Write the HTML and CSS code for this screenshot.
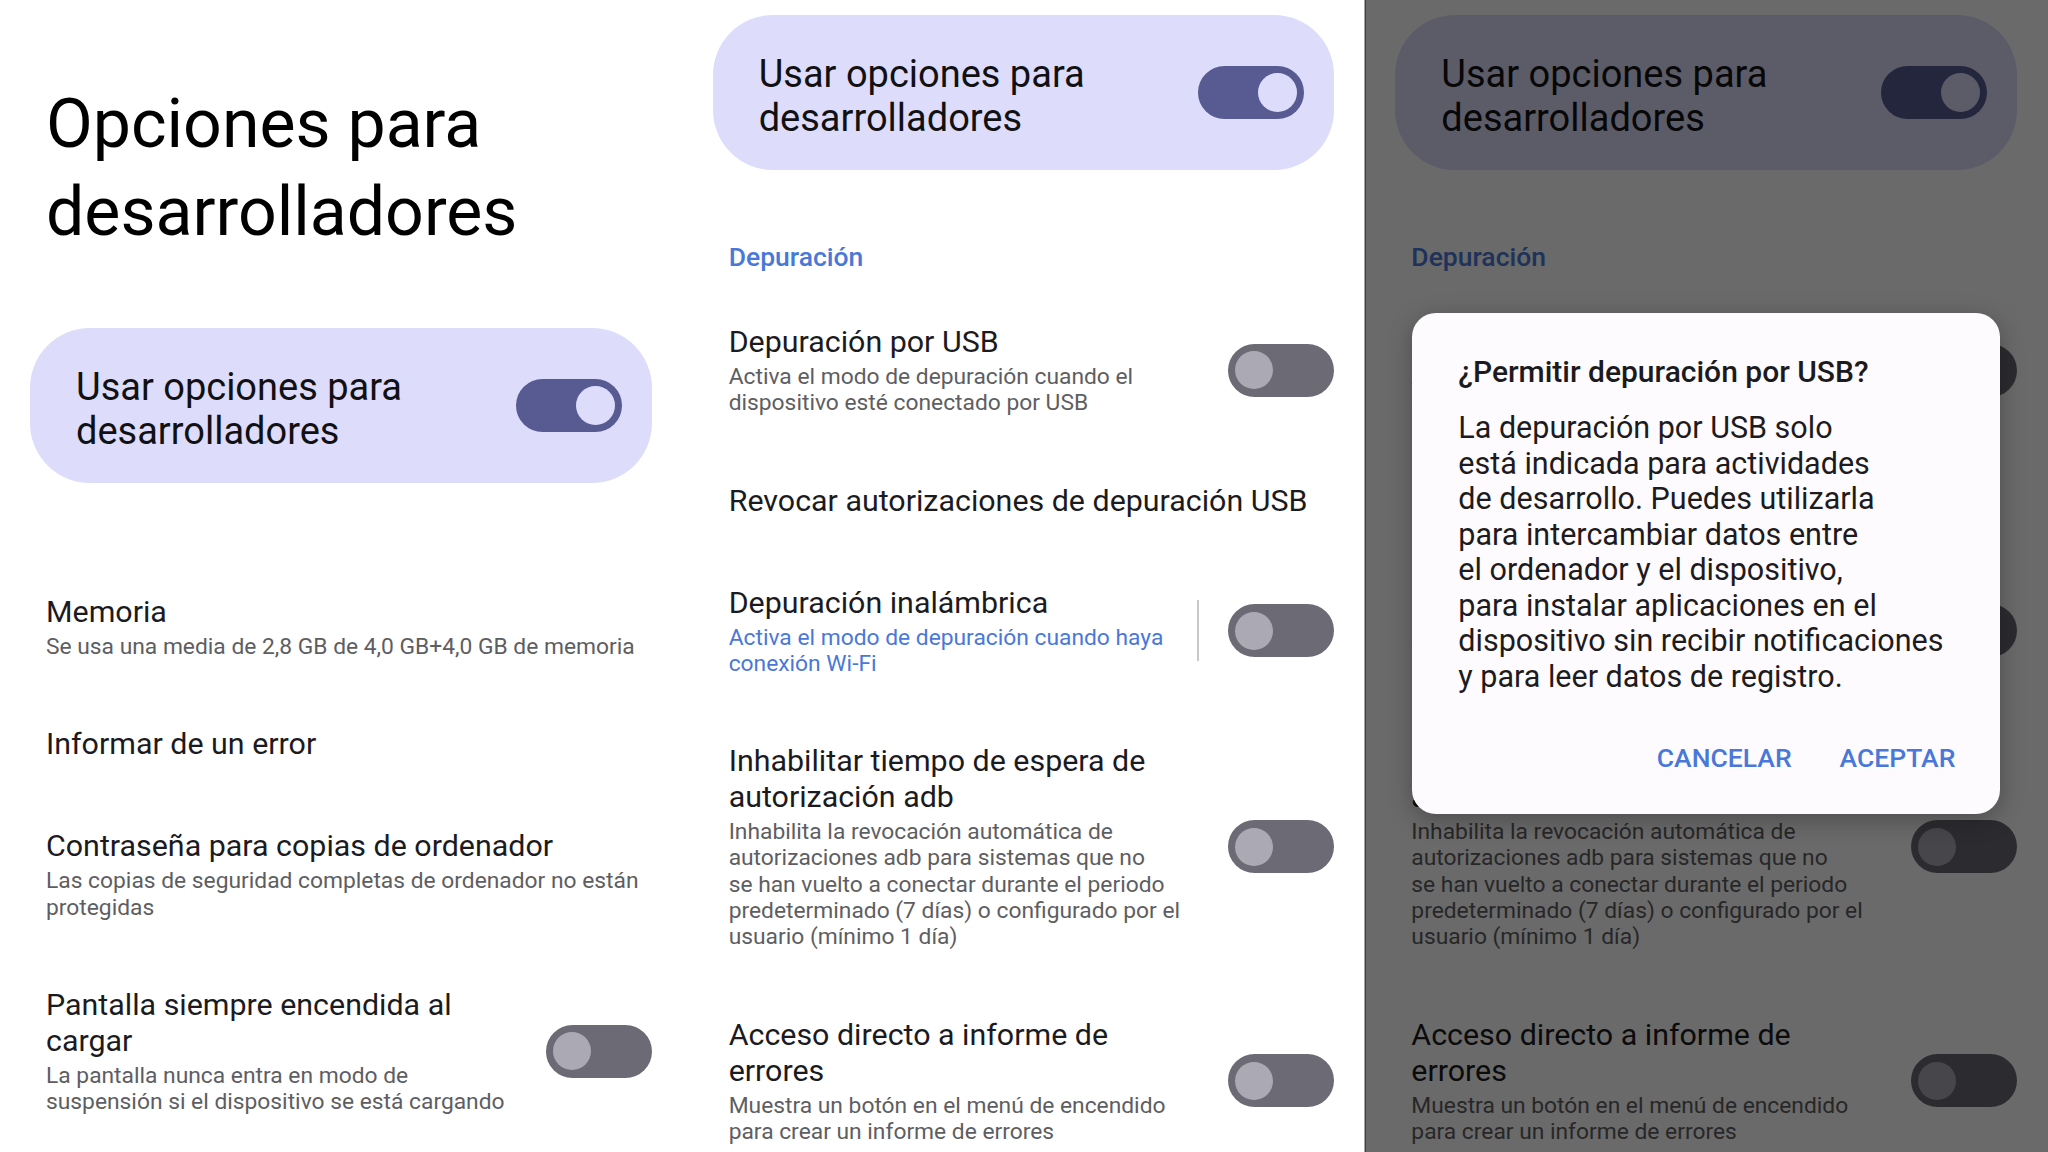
FILE: index.html
```html
<!DOCTYPE html>
<html lang="es">
<head>
<meta charset="utf-8">
<title>Opciones para desarrolladores</title>
<link rel="stylesheet" href="styles.css">
</head>
<body>
<div class="screens">

  <!-- Screen 1: top of the developer options page -->
  <section class="screen">
    <h1 class="page-title">Opciones para<br>desarrolladores</h1>
    <div class="main-switch main-switch--below-title">
      <span class="main-switch__label">Usar opciones para<br>desarrolladores</span>
      <span class="toggle toggle--on"></span>
    </div>
    <ul class="prefs prefs--after-switch">
      <li class="pref">
        <div class="pref__text">
          <div class="pref__title">Memoria</div>
          <div class="pref__summary">Se usa una media de 2,8 GB de 4,0 GB+4,0 GB de memoria</div>
        </div>
      </li>
      <li class="pref">
        <div class="pref__text">
          <div class="pref__title">Informar de un error</div>
        </div>
      </li>
      <li class="pref">
        <div class="pref__text">
          <div class="pref__title">Contraseña para copias de ordenador</div>
          <div class="pref__summary">Las copias de seguridad completas de ordenador no están<br>protegidas</div>
        </div>
      </li>
      <li class="pref">
        <div class="pref__text">
          <div class="pref__title">Pantalla siempre encendida al<br>cargar</div>
          <div class="pref__summary">La pantalla nunca entra en modo de<br>suspensión si el dispositivo se está cargando</div>
        </div>
        <span class="toggle"></span>
      </li>
    </ul>
  </section>

  <!-- Screen 2: scrolled to the debugging category -->
  <section class="screen screen--divided">
    <div class="main-switch main-switch--pinned">
      <span class="main-switch__label">Usar opciones para<br>desarrolladores</span>
      <span class="toggle toggle--on"></span>
    </div>
    <h2 class="category">Depuración</h2>
    <ul class="prefs">
      <li class="pref">
        <div class="pref__text">
          <div class="pref__title">Depuración por USB</div>
          <div class="pref__summary">Activa el modo de depuración cuando el<br>dispositivo esté conectado por USB</div>
        </div>
        <span class="toggle"></span>
      </li>
      <li class="pref">
        <div class="pref__text">
          <div class="pref__title">Revocar autorizaciones de depuración USB</div>
        </div>
      </li>
      <li class="pref">
        <div class="pref__text">
          <div class="pref__title">Depuración inalámbrica</div>
          <div class="pref__summary pref__summary--link">Activa el modo de depuración cuando haya<br>conexión Wi-Fi</div>
        </div>
        <span class="pref__divider"></span>
        <span class="toggle"></span>
      </li>
      <li class="pref">
        <div class="pref__text">
          <div class="pref__title">Inhabilitar tiempo de espera de<br>autorización adb</div>
          <div class="pref__summary">Inhabilita la revocación automática de<br>autorizaciones adb para sistemas que no<br>se han vuelto a conectar durante el periodo<br>predeterminado (7 días) o configurado por el<br>usuario (mínimo 1 día)</div>
        </div>
        <span class="toggle"></span>
      </li>
      <li class="pref">
        <div class="pref__text">
          <div class="pref__title">Acceso directo a informe de<br>errores</div>
          <div class="pref__summary">Muestra un botón en el menú de encendido<br>para crear un informe de errores</div>
        </div>
        <span class="toggle"></span>
      </li>
    </ul>
  </section>

  <!-- Screen 3: same list with the USB debugging confirmation dialog -->
  <section class="screen screen--dimmed">
    <div class="main-switch main-switch--pinned">
      <span class="main-switch__label">Usar opciones para<br>desarrolladores</span>
      <span class="toggle toggle--on"></span>
    </div>
    <h2 class="category">Depuración</h2>
    <ul class="prefs">
      <li class="pref">
        <div class="pref__text">
          <div class="pref__title">Depuración por USB</div>
          <div class="pref__summary">Activa el modo de depuración cuando el<br>dispositivo esté conectado por USB</div>
        </div>
        <span class="toggle"></span>
      </li>
      <li class="pref">
        <div class="pref__text">
          <div class="pref__title">Revocar autorizaciones de depuración USB</div>
        </div>
      </li>
      <li class="pref">
        <div class="pref__text">
          <div class="pref__title">Depuración inalámbrica</div>
          <div class="pref__summary pref__summary--link">Activa el modo de depuración cuando haya<br>conexión Wi-Fi</div>
        </div>
        <span class="pref__divider"></span>
        <span class="toggle"></span>
      </li>
      <li class="pref">
        <div class="pref__text">
          <div class="pref__title">Inhabilitar tiempo de espera de<br>autorización adb</div>
          <div class="pref__summary">Inhabilita la revocación automática de<br>autorizaciones adb para sistemas que no<br>se han vuelto a conectar durante el periodo<br>predeterminado (7 días) o configurado por el<br>usuario (mínimo 1 día)</div>
        </div>
        <span class="toggle"></span>
      </li>
      <li class="pref">
        <div class="pref__text">
          <div class="pref__title">Acceso directo a informe de<br>errores</div>
          <div class="pref__summary">Muestra un botón en el menú de encendido<br>para crear un informe de errores</div>
        </div>
        <span class="toggle"></span>
      </li>
    </ul>

    <div class="dialog" role="dialog" aria-labelledby="dlg-title">
      <h3 class="dialog__title" id="dlg-title">¿Permitir depuración por USB?</h3>
      <p class="dialog__body">La depuración por USB solo<br>está indicada para actividades<br>de desarrollo. Puedes utilizarla<br>para intercambiar datos entre<br>el ordenador y el dispositivo,<br>para instalar aplicaciones en el<br>dispositivo sin recibir notificaciones<br>y para leer datos de registro.</p>
      <div class="dialog__actions">
        <button class="dialog__btn" type="button">CANCELAR</button>
        <button class="dialog__btn" type="button">ACEPTAR</button>
      </div>
    </div>
  </section>

</div>
</body>
</html>
```

FILE: styles.css
```css
html, body {
  margin: 0;
  padding: 0;
  background: #ffffff;
}

body {
  font-family: Roboto, "Noto Sans", "Liberation Sans", sans-serif;
  color: #1b1b1f;
}

.screens {
  display: grid;
  grid-template-columns: repeat(3, 1fr);
  width: 2048px;
  height: 1152px;
  overflow: hidden;
}

.screen {
  position: relative;
  overflow: hidden;
  background: #ffffff;
}

.screen--divided {
  box-shadow: inset -1px 0 0 #a6a6a6;
}

/* scrim behind the dialog */
.screen--dimmed::after {
  content: "";
  position: absolute;
  inset: 0;
  background: rgba(0, 0, 0, 0.585);
  box-shadow: inset 1px 0 0 #3f3f3f;
  z-index: 1;
}

/* ---------- page title ---------- */
.page-title {
  margin: 80px 0 0 46px;
  font-size: 68px;
  line-height: 88px;
  font-weight: 400;
  color: #000000;
  white-space: nowrap;
}

/* ---------- main switch bar ---------- */
.main-switch {
  display: flex;
  align-items: center;
  justify-content: space-between;
  height: 155px;
  margin: 0 31px 0 30px;
  padding: 0 30px 0 46px;
  box-sizing: border-box;
  border-radius: 60px;
  background: #dddcfb;
}

.main-switch--below-title {
  margin-top: 72px;
}

.main-switch--pinned {
  margin-top: 15px;
}

.main-switch__label {
  font-size: 38px;
  line-height: 44px;
  color: #111114;
  white-space: nowrap;
  padding-top: 6px;
}

/* ---------- switches ---------- */
.toggle {
  flex: none;
  display: flex;
  align-items: center;
  width: 106px;
  height: 53px;
  padding: 0 7px;
  box-sizing: border-box;
  border-radius: 27px;
  background: #6b6a75;
}

.toggle::after {
  content: "";
  width: 38px;
  height: 38px;
  border-radius: 50%;
  background: #aba9b4;
}

.toggle--on {
  justify-content: flex-end;
  background: #585b92;
}

.toggle--on::after {
  width: 39px;
  height: 39px;
  background: #dddcfb;
}

/* ---------- category header ---------- */
.category {
  margin: 72px 0 0 46px;
  font-size: 26.5px;
  line-height: 30px;
  font-weight: 500;
  color: #4a78d8;
}

/* ---------- preference list ---------- */
.prefs {
  list-style: none;
  margin: 19px 0 0;
  padding: 0;
}

.prefs--after-switch {
  margin-top: 78px;
}

.pref {
  display: flex;
  align-items: center;
  padding: 33px 31px 33px 46px;
}

.pref__text {
  flex: 1;
  min-width: 0;
}

.pref__title {
  font-size: 30.4px;
  line-height: 36px;
  color: #1b1b1f;
  white-space: nowrap;
}

.pref__summary {
  margin-top: 4px;
  font-size: 22.8px;
  line-height: 26.3px;
  color: #5e5e62;
  white-space: nowrap;
}

.pref__summary--link {
  color: #4a78d8;
}

.pref__divider {
  flex: none;
  width: 2px;
  height: 61px;
  margin-right: 29px;
  background: #c9c9cc;
}

/* ---------- dialog ---------- */
.dialog {
  position: absolute;
  z-index: 2;
  left: 47px;
  top: 313px;
  width: 588px;
  height: 501px;
  box-sizing: border-box;
  padding: 41px 45px 0 46px;
  border-radius: 24px;
  background: #fdfbfe;
  box-shadow: 0 6px 24px rgba(0, 0, 0, 0.28);
}

.dialog__title {
  margin: 0;
  font-size: 30px;
  line-height: 36px;
  font-weight: 500;
  color: #1b1b1f;
  white-space: nowrap;
}

.dialog__body {
  margin: 20px 0 0;
  font-size: 30.5px;
  line-height: 35.5px;
  color: #1d1b20;
  white-space: nowrap;
}

.dialog__actions {
  display: flex;
  justify-content: flex-end;
  gap: 48px;
  margin-top: 48px;
}

.dialog__btn {
  padding: 0;
  border: 0;
  background: none;
  font-family: inherit;
  font-size: 26.5px;
  line-height: 32px;
  font-weight: 500;
  letter-spacing: 0;
  color: #4a78d8;
}
```
